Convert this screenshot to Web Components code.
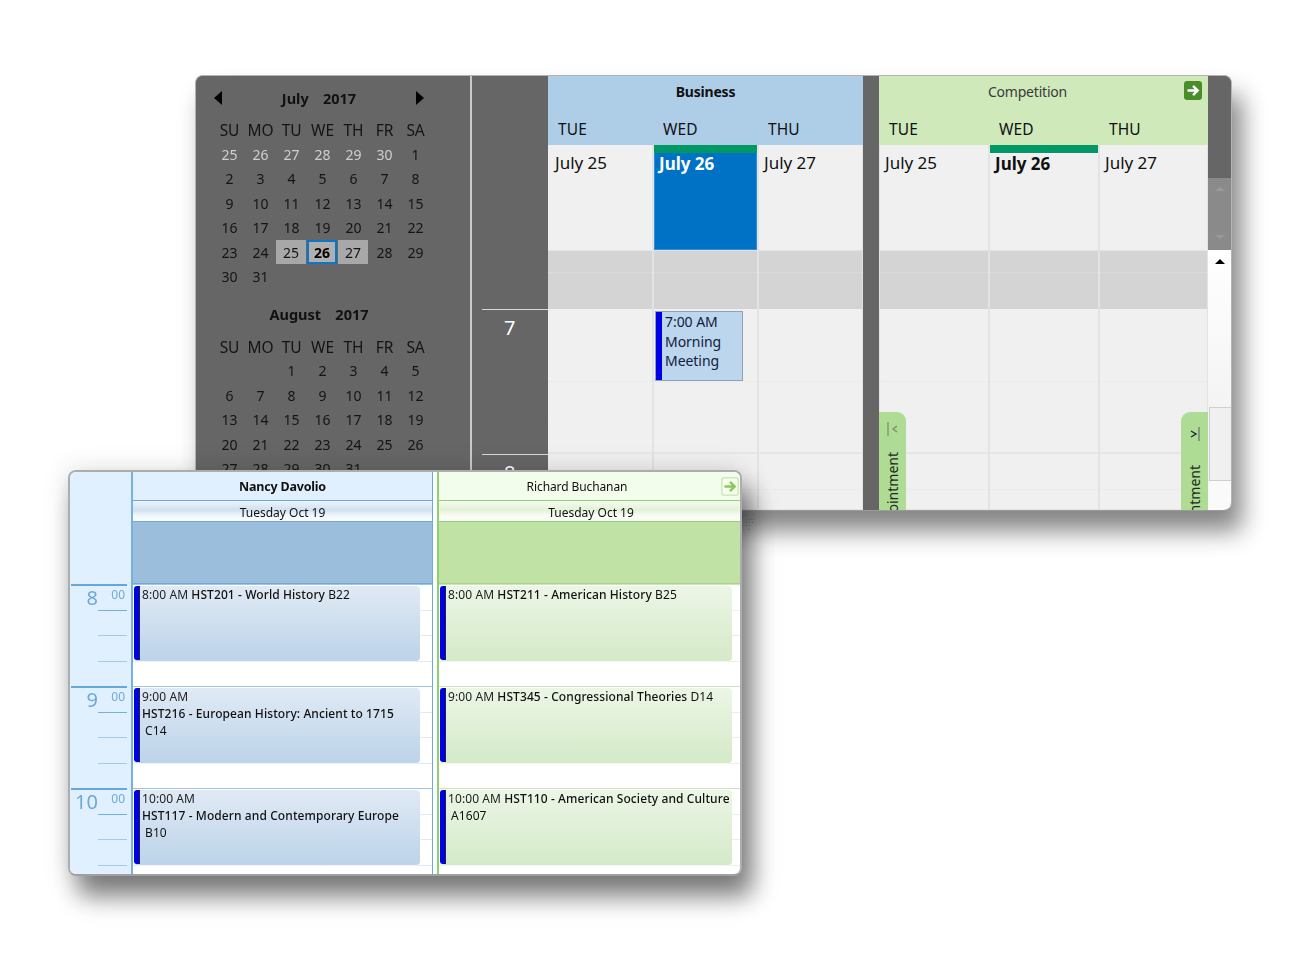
<!DOCTYPE html>
<html>
<head>
<meta charset="utf-8">
<title>Scheduler</title>
<style>
  html, body { margin: 0; padding: 0; background: #fff; }
  body { width: 1290px; height: 957px; overflow: hidden; position: relative; font-family: "Noto Sans", "Open Sans", sans-serif; }
</style>
</head>
<body>

<scheduler-window style="left:195px;top:75px">
  <side-panel slot="side">
    <month-calendar title="July" year="2017" nav leading="25 26 27 28 29 30" start="6" days="31" range="25,27" today="26"></month-calendar>
    <month-calendar title="August" year="2017" start="2" days="31" gap></month-calendar>
  </side-panel>
  <hour-ruler slot="ruler"></hour-ruler>
  <day-group slot="business" name="Business" kind="blue" widths="104 103 103" selected="1" lead="1">
    <meeting-event slot="day-1" time="7:00 AM" subject="Morning Meeting"></meeting-event>
  </day-group>
  <day-group slot="competition" name="Competition" kind="green" widths="108 108 107" marked="1" arrow>
    <nav-tab slot="day-0" side="left" label="Appointment"></nav-tab>
    <nav-tab slot="day-2" side="right" label="Appointment"></nav-tab>
  </day-group>
  <scroll-strip slot="scroll"></scroll-strip>
</scheduler-window>

<resource-window style="left:68px;top:470px">
  <time-ruler slot="ruler"></time-ruler>
  <resource-column slot="first" name="Nancy Davolio" date="Tuesday Oct 19" kind="blue" bold>
    <class-event slot="h0" time="8:00 AM" code="HST201 - World History" room="B22"></class-event>
    <class-event slot="h1" time="9:00 AM" code="HST216 - European History: Ancient to 1715" room="C14" wrap></class-event>
    <class-event slot="h2" time="10:00 AM" code="HST117 - Modern and Contemporary Europe" room="B10" wrap></class-event>
  </resource-column>
  <resource-column slot="second" name="Richard Buchanan" date="Tuesday Oct 19" kind="green" arrow>
    <class-event slot="h0" kind="green" time="8:00 AM" code="HST211 - American History" room="B25"></class-event>
    <class-event slot="h1" kind="green" time="9:00 AM" code="HST345 - Congressional Theories" room="D14"></class-event>
    <class-event slot="h2" kind="green" time="10:00 AM" code="HST110 - American Society and Culture" room="A1607" roomwrap></class-event>
  </resource-column>
</resource-window>

<grip-dots style="left:745px;top:513px"></grip-dots>

<script>
const arrowIcon = (bg, border, fg) => `
  <svg width="18" height="19" viewBox="0 0 18 19">
    <rect x=".75" y=".75" width="16.5" height="17.5" rx="2.5" fill="${bg}" stroke="${border}" stroke-width="1.5"/>
    <path d="M3.5 9.5h10M9 4.8l4.7 4.7L9 14.2" fill="none" stroke="${fg}" stroke-width="2.4"/>
  </svg>`

class BaseEl extends HTMLElement {
    constructor() {
        super()
        this.attachShadow({mode: "open"})
    }
    connectedCallback() {
        this.shadowRoot.innerHTML = `<style>${this.styles()}</style>${this.markup()}`
    }
}

class SchedulerWindow extends BaseEl {
    styles() {
        return `
        :host { position: absolute; display: block; box-sizing: border-box; width: 1037px; height: 436px;
            border: 1px solid #b4b4b4; border-bottom-color: #9a9a9a; border-radius: 8px; background: #666;
            filter: drop-shadow(10px 20px 12px rgba(0,0,0,.48)); }
        .grid { display: grid; grid-template-columns: 274px 2px 76px 315px 16px 329px 23px; height: 100%; overflow: hidden; border-radius: 7px; }
        .rule { background: #c9c9c9; }
        .gutter { background: #666; }
        `
    }
    markup() {
        return `<div class="grid">
            <slot name="side"></slot>
            <div class="rule"></div>
            <slot name="ruler"></slot>
            <slot name="business"></slot>
            <div class="gutter"></div>
            <slot name="competition"></slot>
            <slot name="scroll"></slot>
        </div>`
    }
}

class SidePanel extends BaseEl {
    styles() {
        return `:host { display: block; background: #666; overflow: hidden; padding-left: 18px; box-sizing: border-box; }`
    }
    markup() {
        return `<slot></slot>`
    }
}

class MonthCalendar extends BaseEl {
    styles() {
        return `
        :host { display: block; width: 217px; padding-top: 10px; color: #141414; font-size: 14px; }
        :host([gap]) { padding-top: 13px; }
        .head { display: flex; justify-content: space-between; align-items: center; height: 24px; padding: 0 7px 0 0; margin-bottom: 8px; }
        :host([gap]) .head { margin-bottom: 9px; }
        .title { flex: 1; text-align: center; font-weight: 700; font-size: 14.5px; word-spacing: 1px; white-space: pre; color: #111; }
        .tri { width: 0; height: 0; border-top: 7px solid transparent; border-bottom: 7px solid transparent; }
        .prev { border-right: 8px solid #000; }
        .next { border-left: 8px solid #000; }
        .spacer { width: 8px; }
        .dow, .days { display: grid; grid-template-columns: repeat(7, 31px); text-align: center; }
        .dow span { height: 24px; line-height: 24px; font-size: 15.5px; letter-spacing: -.1px; }
        .days { margin-top: -.5px; }
        .days span { height: 24.5px; line-height: 25px; box-sizing: border-box; }
        .other { color: #cfcfcf; }
        .range { background: #a8a8a8; height: 24px !important; margin-right: 1px; }
        .today { background: #b0b0b0; border: 2px solid #0a78c8; font-weight: 700; color: #000; line-height: 21px !important; height: 24px !important; margin-right: 1px; }
        `
    }
    markup() {
        const title = this.getAttribute("title")
        const year = this.getAttribute("year")
        const leading = (this.getAttribute("leading") || "").split(" ").filter(Boolean)
        const start = Number(this.getAttribute("start"))
        const total = Number(this.getAttribute("days"))
        const range = (this.getAttribute("range") || "").split(",")
        const today = this.getAttribute("today")
        this.removeAttribute("title")
        let cells = ""
        for (let i = 0; i < start; i++) {
            cells += `<span class="other">${leading[i] || ""}</span>`
        }
        for (let d = 1; d <= total; d++) {
            let cls = ""
            if (String(d) === today) cls = "today"
            else if (range.length == 2 && d >= Number(range[0]) && d <= Number(range[1])) cls = "range"
            cells += `<span class="${cls}">${d}</span>`
        }
        const nav = this.hasAttribute("nav")
        return `
        <div class="head">
            ${nav ? '<div class="tri prev"></div>' : '<div class="spacer"></div>'}
            <div class="title">${title}   ${year}</div>
            ${nav ? '<div class="tri next"></div>' : '<div class="spacer"></div>'}
        </div>
        <div class="dow"><span>SU</span><span>MO</span><span>TU</span><span>WE</span><span>TH</span><span>FR</span><span>SA</span></div>
        <div class="days">${cells}</div>`
    }
}

class HourRuler extends BaseEl {
    styles() {
        return `
        :host { display: block; background: #666; color: #fff; padding-top: 233px; }
        .hour { height: 144px; margin-left: 10px; border-top: 1px solid #d8d8d8; font-size: 20px; line-height: 36px; padding-left: 22px; }
        `
    }
    markup() {
        return `<div class="hour">7</div><div class="hour">8</div>`
    }
}

class DayGroup extends BaseEl {
    styles() {
        return `
        :host { display: block; overflow: hidden; background: #e3e3e3; color: #111; }
        .head { height: 69px; }
        :host([kind=blue]) .head { background: #aecee8; }
        :host([kind=green]) .head { background: #cfe9bb; }
        .name { height: 31px; line-height: 31px; text-align: center; font-size: 14px; letter-spacing: -.2px; position: relative; }
        :host([kind=blue]) .name { font-weight: 700; }
        :host([kind=green]) .name { color: #3a3a3a; padding-right: 32px; box-sizing: border-box; }
        .name svg { position: absolute; right: 6px; top: 5px; }
        .row { display: grid; column-gap: 2px; }
        .dow { height: 38px; line-height: 44px; font-size: 15.5px; letter-spacing: .1px; }
        .dow span { padding-left: 9px; }
        .dates { height: 105px; }
        .date { background: #f0f0f0; font-size: 17px; line-height: 36px; padding-left: 5px; box-sizing: border-box; }
        .date.lead { padding-left: 7px; }
        .dow .lead { padding-left: 10px; }
        .date.selected { background: #0072c6; color: #fff; font-weight: 700; border-top: 8px solid #009966; line-height: 21px; box-shadow: inset 1px 0 #2a8fdc, inset -1px 0 #2a8fdc, inset 0 -1px #2a8fdc; }
        .date.marked { font-weight: 700; border-top: 8px solid #009966; box-shadow: inset 0 1px 0 #fff; line-height: 21px; }
        .gray { height: 59px; }
        .gray div { background: #d4d4d4; margin-top: 1px; }
        .gray i { display: block; height: 21px; border-bottom: 1px dotted #dedede; }
        .cell { background: #f0f0f0; position: relative; height: 200px; }
        .q { height: 35.25px; border-bottom: 1px dotted #e6e6e6; }
        .q.faint { border-bottom-color: #ececec; }
        .q.solid { border-bottom: 2px solid #e6e6e6; height: 34.25px; }
        `
    }
    markup() {
        const widths = this.getAttribute("widths").split(" ")
        const tpl = widths.map(w => w + "px").join(" ")
        const selected = this.getAttribute("selected")
        const marked = this.getAttribute("marked")
        const lead = this.hasAttribute("lead")
        const pad = this.getAttribute("kind") == "green" ? "padding-left:1px" : ""
        const days = ["TUE", "WED", "THU"]
        const dates = ["July 25", "July 26", "July 27"]
        const cols = [0, 1, 2]
        const arrow = this.hasAttribute("arrow") ? arrowIcon("#4a8c2a", "#4a8c2a", "#fff") : ""
        return `
        <div class="head">
            <div class="name">${this.getAttribute("name")}${arrow}</div>
            <div class="row dow" style="grid-template-columns:${tpl};${pad}">
                ${cols.map(i => `<span class="${lead && i == 0 ? "lead" : ""}">${days[i]}</span>`).join("")}
            </div>
        </div>
        <div class="row dates" style="grid-template-columns:${tpl};${pad}">
            ${cols.map(i => {
                let cls = "date"
                if (String(i) === selected) cls += " selected"
                if (String(i) === marked) cls += " marked"
                if (lead && i == 0) cls += " lead"
                return `<div class="${cls}">${dates[i]}</div>`
            }).join("")}
        </div>
        <div class="row gray" style="grid-template-columns:${tpl};${pad}">
            ${cols.map(() => `<div><i></i></div>`).join("")}
        </div>
        <div class="row hours" style="grid-template-columns:${tpl};${pad}">
            ${cols.map(i => `<div class="cell">
                <div class="q" style="border-bottom-color:transparent"></div>
                <div class="q"></div>
                <div class="q faint"></div>
                <div class="q solid"></div>
                <div class="q"></div>
                <slot name="day-${i}"></slot>
            </div>`).join("")}
        </div>`
    }
}

class MeetingEvent extends BaseEl {
    styles() {
        return `
        :host { position: absolute; top: 2px; left: 1px; display: flex; box-sizing: border-box; width: 88px; height: 70px;
            background: #bcd6ee; border: 1px solid #8fa3b5; color: #12203a; font-size: 14px; line-height: 19.5px; letter-spacing: -.05px; }
        .bar { width: 6px; background: #0000e6; flex: none; }
        .txt { padding: 0 0 0 3px; }
        `
    }
    markup() {
        const subject = this.getAttribute("subject").split(" ")
        return `<div class="bar"></div><div class="txt">${this.getAttribute("time")}<br>${subject[0]}<br>${subject[1]}</div>`
    }
}

class NavTab extends BaseEl {
    styles() {
        return `
        :host { position: absolute; top: 103px; width: 27px; height: 98px; background: #aedc94; overflow: hidden; box-sizing: border-box;
            display: flex; flex-direction: column; align-items: center; color: #1d2a1d; font-size: 14px; }
        :host([side=left]) { left: -1px; border-top-right-radius: 9px; }
        :host([side=right]) { right: -1px; border-top-left-radius: 9px; }
        svg { flex: none; margin-top: 10px; }
        :host([side=right]) svg { margin-top: 15px; }
        .txt { writing-mode: vertical-rl; transform: rotate(180deg); white-space: nowrap; flex: none; margin-top: 16px; line-height: 20px; }
        :host([side=right]) .txt { margin-top: 24px; }
        `
    }
    markup() {
        const left = this.getAttribute("side") == "left"
        const icon = left
            ? `<path d="M2 0v14" stroke="#7c8a6a" stroke-width="1.2"/><path d="M11 4L7 7l4 3" fill="none" stroke="#7c8a6a" stroke-width="1.2"/>`
            : `<path d="M11 0v14" stroke="#6b6b6b" stroke-width="1.2"/><path d="M3 4l5 3-5 3" fill="none" stroke="#223" stroke-width="1.4"/>`
        return `<svg width="13" height="14" viewBox="0 0 13 14">${icon}</svg>
            <div class="txt">${this.getAttribute("label")}</div>`
    }
}

class ScrollStrip extends BaseEl {
    styles() {
        return `
        :host { display: flex; flex-direction: column; background: #f4f4f4; overflow: hidden; }
        .dark { height: 102px; background: #666; flex: none; }
        .mid { height: 72px; flex: none; background: #8a8a8a; display: flex; flex-direction: column; align-items: center; justify-content: space-between; padding: 9px 0 11px; box-sizing: border-box; }
        .up { width: 0; height: 0; border-left: 5px solid transparent; border-right: 5px solid transparent; }
        .mid .up { border-bottom: 4px solid #999; }
        .mid .down { transform: rotate(180deg); }
        .track { height: 157px; flex: none; background: linear-gradient(#fff, #f4f4f4); display: flex; justify-content: center; padding-top: 9px; box-sizing: border-box; }
        .track .up { border-bottom: 5px solid #000; }
        .thumb { height: 74px; flex: none; box-sizing: border-box; border: 1px solid #cfcfcf; border-right: 0; background: #f0f0f0; margin-left: 1px; }
        .tail { flex: 1; background: #fafafa; }
        `
    }
    markup() {
        return `<div class="dark"></div>
            <div class="mid"><div class="up"></div><div class="up down"></div></div>
            <div class="track"><div class="up"></div></div>
            <div class="thumb"></div>
            <div class="tail"></div>`
    }
}

class ResourceWindow extends BaseEl {
    styles() {
        return `
        :host { position: absolute; display: block; box-sizing: border-box; width: 674px; height: 406px;
            border: 2px solid #adadad; border-bottom-color: #a0a0a0; border-radius: 8px; background: #fff;
            filter: drop-shadow(10px 20px 12px rgba(0,0,0,.48)) drop-shadow(0 0 12px rgba(0,0,0,.14)); }
        .row { display: grid; grid-template-columns: 63px 300px 4px 303px; height: 100%; overflow: hidden; border-radius: 6px; }
        .gap { background: #fff; }
        `
    }
    markup() {
        return `<div class="row">
            <slot name="ruler"></slot>
            <slot name="first"></slot>
            <div class="gap"></div>
            <slot name="second"></slot>
        </div>`
    }
}

class TimeRuler extends BaseEl {
    styles() {
        return `
        :host { display: block; background: #e1f0ff; border-right: 2px solid #79b1de; box-sizing: border-box; padding-top: 112px; color: #6fa9d6; overflow: hidden; }
        .hour { height: 102px; box-sizing: border-box; margin-left: 1px; margin-right: 4px; border-top: 2px solid #64a9de; display: grid; grid-template-columns: 27px 29px; grid-template-rows: 24.5px 25.5px 25.5px; }
        .num { grid-row: 1 / 3; font-size: 20px; text-align: right; line-height: 23px; }
        .min { font-size: 12px; text-align: right; line-height: 18px; border-bottom: 1px solid #6fb0e0; padding-right: 2px; box-sizing: border-box; }
        .tick { grid-column: 2; border-bottom: 1px solid #a3cbe8; box-sizing: border-box; }
        `
    }
    markup() {
        return [8, 9, 10].map(h => `<div class="hour">
            <div class="num">${h}</div>
            <div class="min">00</div>
            <div class="tick"></div>
            <div class="tick"></div>
        </div>`).join("")
    }
}

class ResourceColumn extends BaseEl {
    styles() {
        return `
        :host { display: block; color: #111; --line: #6aa9dc; --head: #e1f0ff; --band: #9bbedd; --mid: #cfe0f0; --soft: #eef5fb; --hour: #a4c5e2; --quarter: #dde9f4; }
        :host([kind=green]) { --line: #8fd070; --head: #f3fdec; --band: #c0e2a4; --mid: #e3f2d8; --soft: #f6fbf1; --hour: #cce3bc; --quarter: #e8f2e0; }
        :host { box-sizing: border-box; overflow: hidden; }
        :host([kind=blue]) .wrap { border-right: 1.5px solid var(--line); }
        :host([kind=green]) .wrap { border-left: 2px solid var(--line); }
        .wrap { height: 100%; box-sizing: border-box; }
        .name { height: 28px; line-height: 29px; text-align: center; background: var(--head); font-size: 12px; letter-spacing: -.1px; position: relative; }
        :host([bold]) .name { font-weight: 700; font-size: 12.5px; letter-spacing: -.2px; }
        :host([kind=green]) .name { padding-right: 25px; box-sizing: border-box; }
        .name svg { position: absolute; right: 1px; top: 5px; }
        .date { height: 22px; line-height: 23px; text-align: center; font-size: 12px; box-sizing: border-box;
            border-top: 1px solid var(--line); border-bottom: 1px solid var(--line); overflow: hidden;
            background: linear-gradient(var(--soft) 0, var(--mid) 45%, var(--soft) 70%, #fff 100%); }
        :host([kind=green]) .date { padding-left: 3px; }
        .band { height: 62px; background: var(--band); box-sizing: border-box; border-bottom: 1px solid var(--line); }
        :host([kind=green]) .band { border-bottom-color: #a6d488; }
        .hour { height: 102px; position: relative; box-sizing: border-box; border-top: 1px solid var(--hour); }
        .q { height: 25.5px; box-sizing: border-box; border-bottom: 1px solid var(--quarter); }
        `
    }
    markup() {
        const arrow = this.hasAttribute("arrow") ? arrowIcon("#f3fdec", "#cfe8bd", "#8bc95e") : ""
        return `<div class="wrap">
            <div class="name">${this.getAttribute("name")}${arrow}</div>
            <div class="date">${this.getAttribute("date")}</div>
            <div class="band"></div>
            ${["h0", "h1", "h2"].map(h => `<div class="hour">
                <div class="q"></div><div class="q"></div><div class="q"></div>
                <slot name="${h}"></slot>
            </div>`).join("")}
        </div>`
    }
}

class ClassEvent extends BaseEl {
    styles() {
        return `
        :host { position: absolute; top: 1px; left: 1px; right: 12px; height: 75px; display: flex; box-sizing: border-box;
            border-radius: 4px; background: linear-gradient(#e0eaf5, #bcd3e9); font-size: 12px; line-height: 17px; color: #111; letter-spacing: .09px; box-shadow: 0 0 0 1px rgba(255,255,255,.5); }
        :host([kind=green]) { background: linear-gradient(#ecf6e6, #d4eac8); left: 1px; right: 8px; }
        .bar { width: 5px; flex: none; background: #0000e6; border-radius: 3px 0 0 3px; border-right: 1px solid #223; margin-bottom: 1px; }
        .txt { padding: 0 0 0 2px; white-space: nowrap; }
        .t { color: #222; }
        .c { font-weight: 500; }
        .room { padding-left: 3px; }
        `
    }
    markup() {
        const time = this.getAttribute("time")
        const code = this.getAttribute("code")
        const room = this.getAttribute("room")
        let body = `<span class="t">${time}</span> <span class="c">${code}</span> ${room}`
        if (this.hasAttribute("wrap")) {
            body = `<span class="t">${time}</span><br><span class="c">${code}</span><br><span class="room">${room}</span>`
        }
        if (this.hasAttribute("roomwrap")) {
            body = `<span class="t">${time}</span> <span class="c">${code}</span><br><span class="room">${room}</span>`
        }
        return `<div class="bar"></div><div class="txt">${body}</div>`
    }
}

class GripDots extends BaseEl {
    styles() {
        return `:host { position: absolute; display: block; width: 9px; height: 11px; }`
    }
    markup() {
        return `<svg width="9" height="11" viewBox="0 0 9 11" fill="#555">
            <rect x="0" y="0" width="1" height="1"/><rect x="3" y="0" width="1" height="1"/><rect x="6" y="0" width="1" height="1"/><rect x="8" y="0" width="1" height="1"/>
            <rect x="1" y="3" width="1" height="1"/><rect x="4" y="3" width="1" height="1"/><rect x="7" y="3" width="1" height="1"/>
            <rect x="1" y="6" width="1" height="1"/><rect x="4" y="6" width="1" height="1"/>
            <rect x="3" y="10" width="1" height="1"/>
        </svg>`
    }
}

customElements.define("scheduler-window", SchedulerWindow)
customElements.define("side-panel", SidePanel)
customElements.define("month-calendar", MonthCalendar)
customElements.define("hour-ruler", HourRuler)
customElements.define("day-group", DayGroup)
customElements.define("meeting-event", MeetingEvent)
customElements.define("nav-tab", NavTab)
customElements.define("scroll-strip", ScrollStrip)
customElements.define("resource-window", ResourceWindow)
customElements.define("time-ruler", TimeRuler)
customElements.define("resource-column", ResourceColumn)
customElements.define("class-event", ClassEvent)
customElements.define("grip-dots", GripDots)
</script>
</body>
</html>
